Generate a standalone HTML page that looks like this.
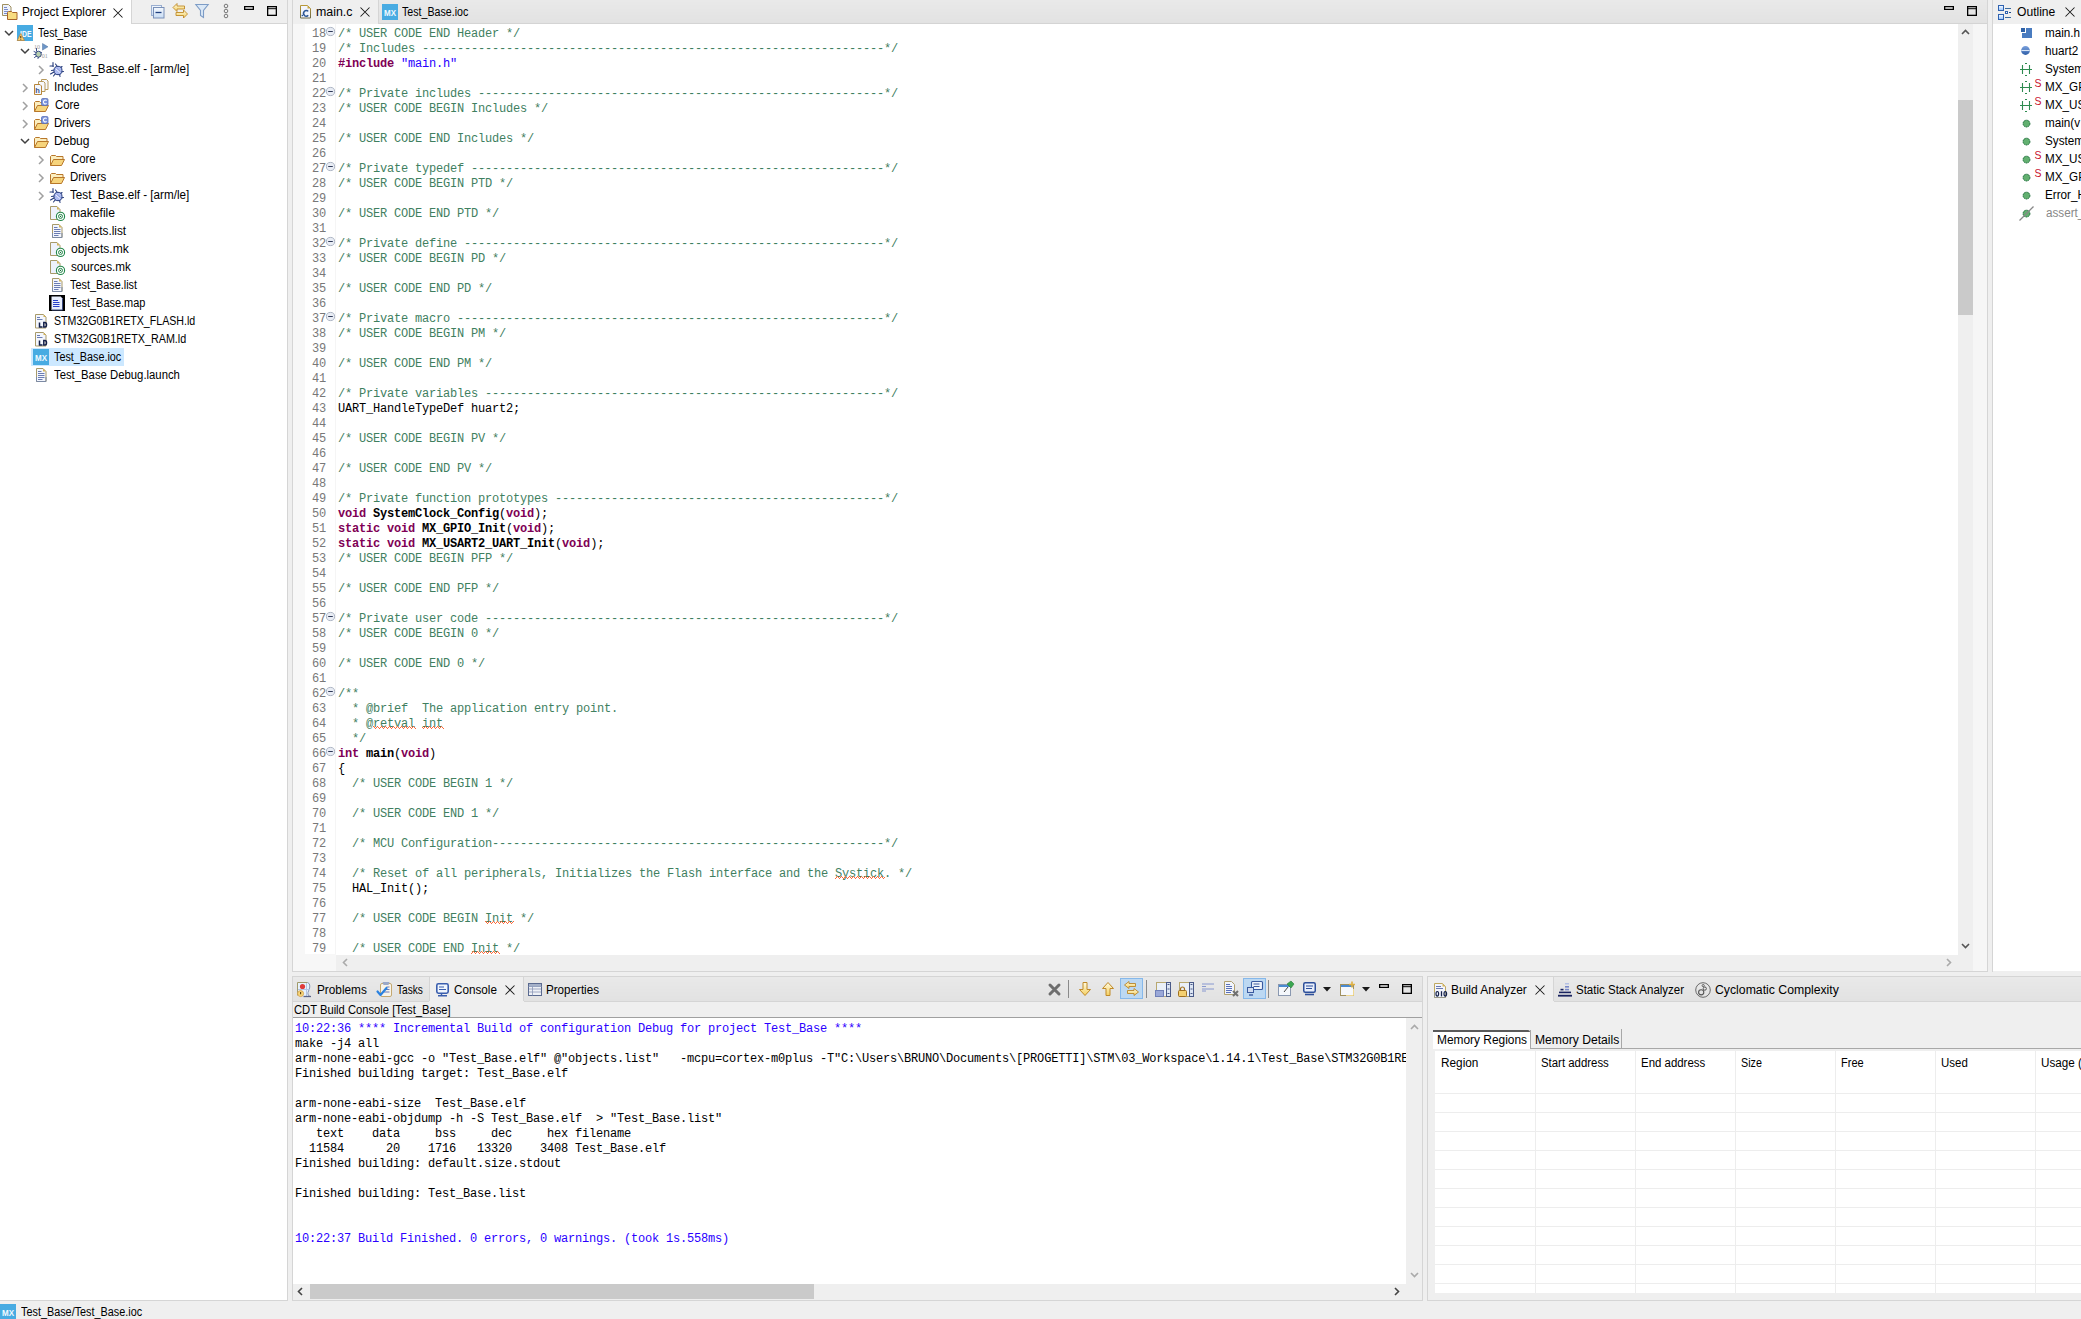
<!DOCTYPE html>
<html><head><meta charset="utf-8"><style>
html,body{margin:0;padding:0;}
body{width:2081px;height:1319px;position:relative;overflow:hidden;background:#efefef;}
.a{position:absolute;white-space:pre;}
svg.a{overflow:visible}
.ui{font-family:"Liberation Sans",sans-serif;font-size:12px;color:#000;}
.mono{font-family:"Liberation Mono",monospace;font-size:12px;letter-spacing:-0.2px;color:#000;}
.ln{color:#787878;}

</style></head><body>
<div class="a" style="left:0px;top:0px;width:287px;height:1300px;background:#fff;"></div>
<div class="a" style="left:287px;top:0px;width:1px;height:1300px;background:#d5d5d5;"></div>
<div class="a" style="left:0px;top:1300px;width:288px;height:1px;background:#d5d5d5;"></div>
<div class="a" style="left:131px;top:0px;width:156px;height:23px;background:#efefef;"></div>
<div class="a" style="left:131px;top:0px;width:1px;height:23px;background:#d5d5d5;"></div>
<div class="a" style="left:131px;top:23px;width:156px;height:1px;background:#d5d5d5;"></div>
<svg class="a" style="left:2px;top:4px" width="16" height="16" viewBox="0 0 16 16"><path d="M0.5 0.5h6l2.5 2.5v8.5h-8.5z" fill="#eef2fb" stroke="#a09060"/><path d="M2 3.5h3M2 5.5h4M2 7.5h4M2 9.5h3" stroke="#6b7fc4" stroke-width="0.9"/><path d="M5.5 15.5V8.5l1-1h3l1 1h4.5v7z" fill="#f8dc80" stroke="#a8652a" stroke-linejoin="round"/></svg>
<div class="a ui" style="left:21.52px;top:2px;height:20px;line-height:20px;transform:scaleX(0.9833);transform-origin:0 0;">Project Explorer</div>
<svg class="a" style="left:113px;top:8px" width="10" height="10" viewBox="0 0 10 10"><path d="M0.5 0.5L9.5 9.5M9.5 0.5L0.5 9.5" stroke="#1a1a1a" stroke-width="1.05"/></svg>
<svg class="a" style="left:150px;top:4px" width="16" height="16" viewBox="0 0 16 16"><defs><linearGradient id="cl" x1="0" y1="0" x2="0" y2="1"><stop offset="0" stop-color="#f4f8fd"/><stop offset="1" stop-color="#c8dcf4"/></linearGradient></defs><rect x="1.5" y="1.5" width="10" height="10" fill="url(#cl)" stroke="#9aaed0"/><rect x="3.5" y="3.5" width="10.5" height="10.5" fill="url(#cl)" stroke="#7a90b8"/><path d="M5.5 8.5h6" stroke="#1f3f80" stroke-width="1.3"/></svg>
<svg class="a" style="left:172px;top:2px" width="17" height="18" viewBox="0 0 17 18"><path d="M5 1.5L1 5.5L5 9.5V7h7.5V4H5z" fill="url(#ag)" stroke="#c08a28" stroke-width="0.9" stroke-linejoin="round"/><path d="M11.5 8L15.5 12L11.5 16V13.5H4V10.5h7.5z" fill="url(#ag)" stroke="#c08a28" stroke-width="0.9" stroke-linejoin="round"/></svg>
<svg class="a" style="left:195px;top:3px" width="14" height="16" viewBox="0 0 14 16"><path d="M0.8 1.5h12.4l-4.7 6v7l-3-2v-5z" fill="#dbe8f6" stroke="#7d9cc6" stroke-width="1.1"/></svg>
<svg class="a" style="left:222px;top:3px" width="8" height="16" viewBox="0 0 8 16"><circle cx="4" cy="3" r="1.8" fill="none" stroke="#777" stroke-width="1"/><circle cx="4" cy="8" r="1.8" fill="none" stroke="#777" stroke-width="1"/><circle cx="4" cy="13" r="1.8" fill="none" stroke="#777" stroke-width="1"/></svg>
<svg class="a" style="left:244px;top:6px" width="11" height="5" viewBox="0 0 11 5"><rect x="0.65" y="0.65" width="8.7" height="2.7" fill="#fff" stroke="#000" stroke-width="1.3"/></svg>
<svg class="a" style="left:267px;top:6px" width="11" height="11" viewBox="0 0 11 11"><rect x="0.65" y="0.65" width="8.7" height="8.7" fill="none" stroke="#000" stroke-width="1.3"/><path d="M0.5 2.7h9" stroke="#000" stroke-width="1"/></svg>
<svg class="a" style="left:4px;top:30px" width="10" height="6" viewBox="0 0 10 6"><path d="M1 1L5 5L9 1" fill="none" stroke="#404040" stroke-width="1.5"/></svg>
<svg class="a" style="left:17px;top:25px" width="16" height="16" viewBox="0 0 16 16"><rect width="16" height="16" fill="#48abe2"/><text x="3" y="11.5" textLength="11.5" lengthAdjust="spacingAndGlyphs" font-family="Liberation Sans" font-weight="bold" font-size="9" fill="#f2faff">IDE</text><path d="M3.8 8.5l3.6 7h-7.2z" fill="#f8d070" stroke="#c08030" stroke-width="0.7" stroke-linejoin="round"/><path d="M3.8 11v2.2" stroke="#402a10" stroke-width="1"/><circle cx="3.8" cy="14.3" r="0.5" fill="#402a10"/></svg>
<div class="a ui" style="left:38.00px;top:23px;height:20px;line-height:20px;transform:scaleX(0.8786);transform-origin:0 0;">Test_Base</div>
<svg class="a" style="left:20px;top:48px" width="10" height="6" viewBox="0 0 10 6"><path d="M1 1L5 5L9 1" fill="none" stroke="#404040" stroke-width="1.5"/></svg>
<svg class="a" style="left:33px;top:43px" width="16" height="16" viewBox="0 0 16 16"><text x="1" y="5.8" font-family="Liberation Serif" font-size="6" fill="#999">10</text><path d="M9.5 0.5l5.5 3.3-5.5 3.3z" fill="#6d96c8" stroke="#4a70a0" stroke-width="0.5"/><g stroke="#243a7a" stroke-width="0.9" stroke-linecap="round"><path d="M3.5 5.5v2.5M1 8.5l2 1M1 11.5h2M1.5 14.5l2-1.5M5 15.5l0.5-1.5M8.5 9.5l-1.5 1"/></g><ellipse cx="5.5" cy="11.2" rx="2.8" ry="3" fill="#b8d0b0" stroke="#243a7a" stroke-width="0.9"/><text x="8.8" y="14.5" font-family="Liberation Serif" font-size="6" fill="#999">01</text></svg>
<div class="a ui" style="left:53.84px;top:41px;height:20px;line-height:20px;transform:scaleX(0.9643);transform-origin:0 0;">Binaries</div>
<svg class="a" style="left:38px;top:65px" width="6" height="10" viewBox="0 0 6 10"><path d="M1 1L5 5L1 9" fill="none" stroke="#a0a0a0" stroke-width="1.5"/></svg>
<svg class="a" style="left:49px;top:61px" width="16" height="16" viewBox="0 0 16 16"><g stroke="#243a7a" stroke-width="1.1" stroke-linecap="round"><path d="M4 1.5v4M1 5h3.5M6.5 3l1.5 2M2.5 9.5l3 -0.5M1.5 13l3.5-2M4.5 15l2-2.5M11 15.5l-0.5-2.5M14.5 10.5l-3 0.5M13 5.5l-2 2"/></g><ellipse cx="9" cy="9.5" rx="4" ry="4.2" fill="#aebcf2" stroke="#243a7a" stroke-width="1"/><path d="M7 8l4 3.5" stroke="#fff" stroke-width="0.8"/><path d="M7.5 7l4 3.5" stroke="#7080c0" stroke-width="0.6"/></svg>
<div class="a ui" style="left:70.00px;top:59px;height:20px;line-height:20px;transform:scaleX(0.9713);transform-origin:0 0;">Test_Base.elf - [arm/le]</div>
<svg class="a" style="left:22px;top:83px" width="6" height="10" viewBox="0 0 6 10"><path d="M1 1L5 5L1 9" fill="none" stroke="#a0a0a0" stroke-width="1.5"/></svg>
<svg class="a" style="left:33px;top:79px" width="16" height="16" viewBox="0 0 16 16"><path d="M8.5 0.5h5l1.5 1.5v8.5h-6.5z" fill="#f7f8fc" stroke="#b89a5c"/><path d="M5.5 2.5h5l1.5 1.5v8.5h-6.5z" fill="#f7f8fc" stroke="#b89a5c"/><path d="M1.5 5.5h5.5l1.5 1.5v8.5h-7z" fill="#f3f6fd" stroke="#b8863a"/><text x="2.3" y="14" font-family="Liberation Sans" font-weight="bold" font-size="7.5" fill="#3a5288">h</text></svg>
<div class="a ui" style="left:53.81px;top:77px;height:20px;line-height:20px;transform:scaleX(0.9886);transform-origin:0 0;">Includes</div>
<svg class="a" style="left:22px;top:101px" width="6" height="10" viewBox="0 0 6 10"><path d="M1 1L5 5L1 9" fill="none" stroke="#a0a0a0" stroke-width="1.5"/></svg>
<svg class="a" style="left:33px;top:97px" width="16" height="16" viewBox="0 0 16 16"><path d="M1.5 14.5V5.5L2.5 4.5h4l1 1h6.5v3" fill="#fbeec0" stroke="#b8772a"/><path d="M1.5 14.5l3-6h11l-3 6z" fill="#f6d47c" stroke="#b8772a" stroke-linejoin="round"/><rect x="8.5" y="1.5" width="6.5" height="7" rx="1.2" fill="#7b93dc" stroke="#5b70b8" stroke-width="0.8"/><path d="M13.6 3.6a1.9 1.9 0 1 0 0 2.8" fill="none" stroke="#fff" stroke-width="1.1"/></svg>
<div class="a ui" style="left:54.80px;top:95px;height:20px;line-height:20px;transform:scaleX(0.9462);transform-origin:0 0;">Core</div>
<svg class="a" style="left:22px;top:119px" width="6" height="10" viewBox="0 0 6 10"><path d="M1 1L5 5L1 9" fill="none" stroke="#a0a0a0" stroke-width="1.5"/></svg>
<svg class="a" style="left:33px;top:115px" width="16" height="16" viewBox="0 0 16 16"><path d="M1.5 14.5V5.5L2.5 4.5h4l1 1h6.5v3" fill="#fbeec0" stroke="#b8772a"/><path d="M1.5 14.5l3-6h11l-3 6z" fill="#f6d47c" stroke="#b8772a" stroke-linejoin="round"/><rect x="8.5" y="1.5" width="6.5" height="7" rx="1.2" fill="#7b93dc" stroke="#5b70b8" stroke-width="0.8"/><path d="M13.6 3.6a1.9 1.9 0 1 0 0 2.8" fill="none" stroke="#fff" stroke-width="1.1"/></svg>
<div class="a ui" style="left:53.84px;top:113px;height:20px;line-height:20px;transform:scaleX(0.9595);transform-origin:0 0;">Drivers</div>
<svg class="a" style="left:20px;top:138px" width="10" height="6" viewBox="0 0 10 6"><path d="M1 1L5 5L9 1" fill="none" stroke="#404040" stroke-width="1.5"/></svg>
<svg class="a" style="left:33px;top:133px" width="16" height="16" viewBox="0 0 16 16"><path d="M1.5 14.5V5.5L2.5 4.5h4l1 1h6.5v3" fill="#fbeec0" stroke="#b8772a"/><path d="M1.5 14.5l3-6h11l-3 6z" fill="#f6d47c" stroke="#b8772a" stroke-linejoin="round"/></svg>
<div class="a ui" style="left:53.80px;top:131px;height:20px;line-height:20px;transform:scaleX(1.0029);transform-origin:0 0;">Debug</div>
<svg class="a" style="left:38px;top:155px" width="6" height="10" viewBox="0 0 6 10"><path d="M1 1L5 5L1 9" fill="none" stroke="#a0a0a0" stroke-width="1.5"/></svg>
<svg class="a" style="left:49px;top:151px" width="16" height="16" viewBox="0 0 16 16"><path d="M1.5 14.5V5.5L2.5 4.5h4l1 1h6.5v3" fill="#fbeec0" stroke="#b8772a"/><path d="M1.5 14.5l3-6h11l-3 6z" fill="#f6d47c" stroke="#b8772a" stroke-linejoin="round"/></svg>
<div class="a ui" style="left:71.00px;top:149px;height:20px;line-height:20px;transform:scaleX(0.9462);transform-origin:0 0;">Core</div>
<svg class="a" style="left:38px;top:173px" width="6" height="10" viewBox="0 0 6 10"><path d="M1 1L5 5L1 9" fill="none" stroke="#a0a0a0" stroke-width="1.5"/></svg>
<svg class="a" style="left:49px;top:169px" width="16" height="16" viewBox="0 0 16 16"><path d="M1.5 14.5V5.5L2.5 4.5h4l1 1h6.5v3" fill="#fbeec0" stroke="#b8772a"/><path d="M1.5 14.5l3-6h11l-3 6z" fill="#f6d47c" stroke="#b8772a" stroke-linejoin="round"/></svg>
<div class="a ui" style="left:70.05px;top:167px;height:20px;line-height:20px;transform:scaleX(0.9514);transform-origin:0 0;">Drivers</div>
<svg class="a" style="left:38px;top:191px" width="6" height="10" viewBox="0 0 6 10"><path d="M1 1L5 5L1 9" fill="none" stroke="#a0a0a0" stroke-width="1.5"/></svg>
<svg class="a" style="left:49px;top:187px" width="16" height="16" viewBox="0 0 16 16"><g stroke="#243a7a" stroke-width="1.1" stroke-linecap="round"><path d="M4 1.5v4M1 5h3.5M6.5 3l1.5 2M2.5 9.5l3 -0.5M1.5 13l3.5-2M4.5 15l2-2.5M11 15.5l-0.5-2.5M14.5 10.5l-3 0.5M13 5.5l-2 2"/></g><ellipse cx="9" cy="9.5" rx="4" ry="4.2" fill="#aebcf2" stroke="#243a7a" stroke-width="1"/><path d="M7 8l4 3.5" stroke="#fff" stroke-width="0.8"/><path d="M7.5 7l4 3.5" stroke="#7080c0" stroke-width="0.6"/></svg>
<div class="a ui" style="left:70.00px;top:185px;height:20px;line-height:20px;transform:scaleX(0.9713);transform-origin:0 0;">Test_Base.elf - [arm/le]</div>
<svg class="a" style="left:49px;top:205px" width="16" height="16" viewBox="0 0 16 16"><path d="M1.5 1.5h6.5l3 3v10h-9.5z" fill="#eef2fc" stroke="#a89a6a"/><path d="M8 1.5v3h3z" fill="#d4b45c"/><circle cx="11.5" cy="11.4" r="4.1" fill="#fff" stroke="#22884a" stroke-width="1.1"/><circle cx="11.5" cy="11.4" r="2" fill="#fff" stroke="#22884a" stroke-width="1"/><circle cx="11.5" cy="11.4" r="0.7" fill="#1a6a3a"/></svg>
<div class="a ui" style="left:69.99px;top:203px;height:20px;line-height:20px;transform:scaleX(1.0068);transform-origin:0 0;">makefile</div>
<svg class="a" style="left:49px;top:223px" width="16" height="16" viewBox="0 0 16 16"><path d="M3.5 1.5h6.5l3 3v10h-9.5z" fill="#f3f6fd" stroke="#a89a6a"/><path d="M3.5 10v4.5h9.5V10" fill="none" stroke="#7c8aa4"/><path d="M10 1.5v3h3z" fill="#d4b45c"/><path d="M5 4.5h3.5M5 6.5h6.5M5 8.5h6.5M5 10.5h6.5M5 12.5h4.5" stroke="#5a6eaa" stroke-width="0.9"/></svg>
<div class="a ui" style="left:71.00px;top:221px;height:20px;line-height:20px;transform:scaleX(0.9839);transform-origin:0 0;">objects.list</div>
<svg class="a" style="left:49px;top:241px" width="16" height="16" viewBox="0 0 16 16"><path d="M1.5 1.5h6.5l3 3v10h-9.5z" fill="#eef2fc" stroke="#a89a6a"/><path d="M8 1.5v3h3z" fill="#d4b45c"/><circle cx="11.5" cy="11.4" r="4.1" fill="#fff" stroke="#22884a" stroke-width="1.1"/><circle cx="11.5" cy="11.4" r="2" fill="#fff" stroke="#22884a" stroke-width="1"/><circle cx="11.5" cy="11.4" r="0.7" fill="#1a6a3a"/></svg>
<div class="a ui" style="left:71.00px;top:239px;height:20px;line-height:20px;transform:scaleX(1.0070);transform-origin:0 0;">objects.mk</div>
<svg class="a" style="left:49px;top:259px" width="16" height="16" viewBox="0 0 16 16"><path d="M1.5 1.5h6.5l3 3v10h-9.5z" fill="#eef2fc" stroke="#a89a6a"/><path d="M8 1.5v3h3z" fill="#d4b45c"/><circle cx="11.5" cy="11.4" r="4.1" fill="#fff" stroke="#22884a" stroke-width="1.1"/><circle cx="11.5" cy="11.4" r="2" fill="#fff" stroke="#22884a" stroke-width="1"/><circle cx="11.5" cy="11.4" r="0.7" fill="#1a6a3a"/></svg>
<div class="a ui" style="left:71.00px;top:257px;height:20px;line-height:20px;transform:scaleX(0.9754);transform-origin:0 0;">sources.mk</div>
<svg class="a" style="left:49px;top:277px" width="16" height="16" viewBox="0 0 16 16"><path d="M3.5 1.5h6.5l3 3v10h-9.5z" fill="#f3f6fd" stroke="#a89a6a"/><path d="M3.5 10v4.5h9.5V10" fill="none" stroke="#7c8aa4"/><path d="M10 1.5v3h3z" fill="#d4b45c"/><path d="M5 4.5h3.5M5 6.5h6.5M5 8.5h6.5M5 10.5h6.5M5 12.5h4.5" stroke="#5a6eaa" stroke-width="0.9"/></svg>
<div class="a ui" style="left:70.00px;top:275px;height:20px;line-height:20px;transform:scaleX(0.9054);transform-origin:0 0;">Test_Base.list</div>
<svg class="a" style="left:49px;top:295px" width="16" height="16" viewBox="0 0 16 16"><rect x="0" y="0" width="16" height="16" fill="#000"/><path d="M2.5 1.5h9l2 2v11.5h-11z" fill="#e8eefc"/><path d="M3 15h10.5V3" fill="none" stroke="#3a4a80" stroke-width="1"/><path d="M4 5.5h5M4 7.5h6.5M4 9.5h6.5M4 11.5h6.5" stroke="#2840c8" stroke-width="1.1"/><path d="M11.5 1.5l2 2" stroke="#889" stroke-width="1"/></svg>
<div class="a ui" style="left:70.00px;top:293px;height:20px;line-height:20px;transform:scaleX(0.9108);transform-origin:0 0;">Test_Base.map</div>
<svg class="a" style="left:33px;top:313px" width="16" height="16" viewBox="0 0 16 16"><path d="M2.5 1.5h8l2.5 2.5v11h-10.5z" fill="#f3f6fd" stroke="#a89a6a"/><path d="M10.5 1.5v2.5h2.5z" fill="#d4b45c"/><path d="M4 4.5h3M4 6.5h5.5" stroke="#5a6eaa" stroke-width="0.9"/><path d="M6.5 9.5v4.5h3M10.8 9.5v4.5h1.2a1.5 2.25 0 0 0 0-4.5z" fill="none" stroke="#14204a" stroke-width="1.5"/></svg>
<div class="a ui" style="left:53.81px;top:311px;height:20px;line-height:20px;transform:scaleX(0.8861);transform-origin:0 0;">STM32G0B1RETX_FLASH.ld</div>
<svg class="a" style="left:33px;top:331px" width="16" height="16" viewBox="0 0 16 16"><path d="M2.5 1.5h8l2.5 2.5v11h-10.5z" fill="#f3f6fd" stroke="#a89a6a"/><path d="M10.5 1.5v2.5h2.5z" fill="#d4b45c"/><path d="M4 4.5h3M4 6.5h5.5" stroke="#5a6eaa" stroke-width="0.9"/><path d="M6.5 9.5v4.5h3M10.8 9.5v4.5h1.2a1.5 2.25 0 0 0 0-4.5z" fill="none" stroke="#14204a" stroke-width="1.5"/></svg>
<div class="a ui" style="left:53.80px;top:329px;height:20px;line-height:20px;transform:scaleX(0.8973);transform-origin:0 0;">STM32G0B1RETX_RAM.ld</div>
<div class="a" style="left:31px;top:348px;width:93px;height:18px;background:#cce8ff;"></div>
<svg class="a" style="left:33px;top:349px" width="16" height="16" viewBox="0 0 16 16"><rect width="16" height="16" fill="#48abe2"/><text x="2" y="11.5" textLength="12" lengthAdjust="spacingAndGlyphs" font-family="Liberation Sans" font-weight="bold" font-size="9.5" fill="#f2faff">MX</text></svg>
<div class="a ui" style="left:54.00px;top:347px;height:20px;line-height:20px;transform:scaleX(0.9000);transform-origin:0 0;">Test_Base.ioc</div>
<svg class="a" style="left:33px;top:367px" width="16" height="16" viewBox="0 0 16 16"><path d="M3.5 1.5h6.5l3 3v10h-9.5z" fill="#f3f6fd" stroke="#a89a6a"/><path d="M3.5 10v4.5h9.5V10" fill="none" stroke="#7c8aa4"/><path d="M10 1.5v3h3z" fill="#d4b45c"/><path d="M5 4.5h3.5M5 6.5h6.5M5 8.5h6.5M5 10.5h6.5M5 12.5h4.5" stroke="#5a6eaa" stroke-width="0.9"/></svg>
<div class="a ui" style="left:54.00px;top:365px;height:20px;line-height:20px;transform:scaleX(0.9436);transform-origin:0 0;">Test_Base Debug.launch</div>
<div class="a" style="left:292px;top:0px;width:1px;height:972px;background:#d5d5d5;"></div>
<div class="a" style="left:1987px;top:0px;width:1px;height:972px;background:#d5d5d5;"></div>
<div class="a" style="left:292px;top:971px;width:1696px;height:1px;background:#d5d5d5;"></div>
<div class="a" style="left:293px;top:0px;width:1694px;height:1px;background:#e9e9e9;"></div>
<div class="a" style="left:293px;top:1px;width:1694px;height:1px;background:#e9e9e9;"></div>
<div class="a" style="left:293px;top:2px;width:1694px;height:1px;background:#e8e8e8;"></div>
<div class="a" style="left:293px;top:3px;width:1694px;height:1px;background:#e8e8e8;"></div>
<div class="a" style="left:293px;top:4px;width:1694px;height:1px;background:#e8e8e8;"></div>
<div class="a" style="left:293px;top:5px;width:1694px;height:1px;background:#e7e7e7;"></div>
<div class="a" style="left:293px;top:6px;width:1694px;height:1px;background:#e7e7e7;"></div>
<div class="a" style="left:293px;top:7px;width:1694px;height:1px;background:#e7e7e7;"></div>
<div class="a" style="left:293px;top:8px;width:1694px;height:1px;background:#e7e7e7;"></div>
<div class="a" style="left:293px;top:9px;width:1694px;height:1px;background:#e6e6e6;"></div>
<div class="a" style="left:293px;top:10px;width:1694px;height:1px;background:#e6e6e6;"></div>
<div class="a" style="left:293px;top:11px;width:1694px;height:1px;background:#e6e6e6;"></div>
<div class="a" style="left:293px;top:12px;width:1694px;height:1px;background:#e5e5e5;"></div>
<div class="a" style="left:293px;top:13px;width:1694px;height:1px;background:#e5e5e5;"></div>
<div class="a" style="left:293px;top:14px;width:1694px;height:1px;background:#e5e5e5;"></div>
<div class="a" style="left:293px;top:15px;width:1694px;height:1px;background:#e4e4e4;"></div>
<div class="a" style="left:293px;top:16px;width:1694px;height:1px;background:#e4e4e4;"></div>
<div class="a" style="left:293px;top:17px;width:1694px;height:1px;background:#e4e4e4;"></div>
<div class="a" style="left:293px;top:18px;width:1694px;height:1px;background:#e4e4e4;"></div>
<div class="a" style="left:293px;top:19px;width:1694px;height:1px;background:#e3e3e3;"></div>
<div class="a" style="left:293px;top:20px;width:1694px;height:1px;background:#e3e3e3;"></div>
<div class="a" style="left:293px;top:21px;width:1694px;height:1px;background:#e3e3e3;"></div>
<div class="a" style="left:293px;top:22px;width:1694px;height:1px;background:#e2e2e2;"></div>
<div class="a" style="left:293px;top:23px;width:1694px;height:1px;background:#e2e2e2;"></div>
<div class="a" style="left:293px;top:0px;width:85px;height:24px;background:#efefef;"></div>
<div class="a" style="left:378px;top:0px;width:1px;height:24px;background:#d5d5d5;"></div>
<div class="a" style="left:379px;top:23px;width:1608px;height:1px;background:#d4d4d4;"></div>
<svg class="a" style="left:300px;top:5px" width="12" height="14" viewBox="0 0 12 14"><defs><linearGradient id="cg" x1="0" y1="0" x2="0" y2="1"><stop offset="0" stop-color="#b89838"/><stop offset="1" stop-color="#6e6a48"/></linearGradient></defs><path d="M0.5 0.5h7l3 3v9.5h-10z" fill="#f2f5fd" stroke="url(#cg)"/><path d="M7.5 0.5v3h3z" fill="#c8a848"/><path d="M8.2 6.4A2.6 2.9 0 1 0 8.2 10.2" fill="none" stroke="#2c5594" stroke-width="1.5"/><rect x="1.6" y="9.8" width="1.4" height="1.4" fill="#2c5594"/></svg>
<div class="a ui" style="left:316.27px;top:2px;height:20px;line-height:20px;transform:scaleX(1.0324);transform-origin:0 0;">main.c</div>
<svg class="a" style="left:360px;top:7px" width="10" height="10" viewBox="0 0 10 10"><path d="M0.5 0.5L9.5 9.5M9.5 0.5L0.5 9.5" stroke="#1a1a1a" stroke-width="1.05"/></svg>
<svg class="a" style="left:382px;top:4px" width="16" height="16" viewBox="0 0 16 16"><rect width="16" height="16" fill="#48abe2"/><text x="2" y="11.5" textLength="12" lengthAdjust="spacingAndGlyphs" font-family="Liberation Sans" font-weight="bold" font-size="9.5" fill="#f2faff">MX</text></svg>
<div class="a ui" style="left:402.20px;top:2px;height:20px;line-height:20px;transform:scaleX(0.8867);transform-origin:0 0;">Test_Base.ioc</div>
<svg class="a" style="left:1944px;top:6px" width="11" height="5" viewBox="0 0 11 5"><rect x="0.65" y="0.65" width="8.7" height="2.7" fill="#fff" stroke="#000" stroke-width="1.3"/></svg>
<svg class="a" style="left:1967px;top:6px" width="11" height="11" viewBox="0 0 11 11"><rect x="0.65" y="0.65" width="8.7" height="8.7" fill="none" stroke="#000" stroke-width="1.3"/><path d="M0.5 2.7h9" stroke="#000" stroke-width="1"/></svg>
<div class="a" style="left:293px;top:24px;width:12px;height:931px;background:#f7f7f7;"></div>
<div class="a" style="left:305px;top:24px;width:31px;height:930px;background:#fff;"></div>
<div class="a" style="left:335px;top:24px;width:1px;height:930px;background:#f5f5f5;"></div>
<div class="a" style="left:336px;top:24px;width:1622px;height:931px;background:#fff;"></div>
<div class="a" style="left:1958px;top:24px;width:15px;height:947px;background:#efefef;"></div>
<div class="a" style="left:1973px;top:24px;width:14px;height:947px;background:#f6f6f6;"></div>
<div class="a" style="left:293px;top:954px;width:43px;height:17px;background:#f7f7f7;"></div>
<div class="a" style="left:336px;top:955px;width:1622px;height:16px;background:#efefef;"></div>
<div class="a" style="left:1958px;top:100px;width:15px;height:215px;background:#cacaca;"></div>
<svg class="a" style="left:1961px;top:29px" width="9" height="6" viewBox="0 0 9 6"><path d="M1 5L4.5 1.5L8 5" fill="none" stroke="#555" stroke-width="1.6"/></svg>
<svg class="a" style="left:1961px;top:943px" width="9" height="6" viewBox="0 0 9 6"><path d="M1 1L4.5 4.5L8 1" fill="none" stroke="#555" stroke-width="1.6"/></svg>
<svg class="a" style="left:342px;top:958px" width="6" height="9" viewBox="0 0 6 9"><path d="M5 1L1.5 4.5L5 8" fill="none" stroke="#aaa" stroke-width="1.6"/></svg>
<svg class="a" style="left:1946px;top:958px" width="6" height="9" viewBox="0 0 6 9"><path d="M1 1L4.5 4.5L1 8" fill="none" stroke="#aaa" stroke-width="1.6"/></svg>
<div class="a mono ln" style="left:296px;top:27px;height:15px;line-height:15px;width:30px;text-align:right;">18</div>
<svg class="a" style="left:326px;top:27px" width="10" height="10" viewBox="0 0 10 10"><circle cx="4.5" cy="4.5" r="4.1" fill="#e9edf5" stroke="#a4adbd" stroke-width="0.9"/><path d="M2.2 4.5h4.6" stroke="#2f3a58" stroke-width="1"/></svg>
<div class="a mono" style="left:338px;top:27px;height:15px;line-height:15px;"><span style="color:#3f7f5f">/* USER CODE END Header */</span></div>
<div class="a mono ln" style="left:296px;top:42px;height:15px;line-height:15px;width:30px;text-align:right;">19</div>
<div class="a mono" style="left:338px;top:42px;height:15px;line-height:15px;"><span style="color:#3f7f5f">/* Includes ------------------------------------------------------------------*/</span></div>
<div class="a mono ln" style="left:296px;top:57px;height:15px;line-height:15px;width:30px;text-align:right;">20</div>
<div class="a mono" style="left:338px;top:57px;height:15px;line-height:15px;"><b style="color:#7f0055">#include</b> <span style="color:#2a00ff">&quot;main.h&quot;</span></div>
<div class="a mono ln" style="left:296px;top:72px;height:15px;line-height:15px;width:30px;text-align:right;">21</div>
<div class="a mono ln" style="left:296px;top:87px;height:15px;line-height:15px;width:30px;text-align:right;">22</div>
<svg class="a" style="left:326px;top:87px" width="10" height="10" viewBox="0 0 10 10"><circle cx="4.5" cy="4.5" r="4.1" fill="#e9edf5" stroke="#a4adbd" stroke-width="0.9"/><path d="M2.2 4.5h4.6" stroke="#2f3a58" stroke-width="1"/></svg>
<div class="a mono" style="left:338px;top:87px;height:15px;line-height:15px;"><span style="color:#3f7f5f">/* Private includes ----------------------------------------------------------*/</span></div>
<div class="a mono ln" style="left:296px;top:102px;height:15px;line-height:15px;width:30px;text-align:right;">23</div>
<div class="a mono" style="left:338px;top:102px;height:15px;line-height:15px;"><span style="color:#3f7f5f">/* USER CODE BEGIN Includes */</span></div>
<div class="a mono ln" style="left:296px;top:117px;height:15px;line-height:15px;width:30px;text-align:right;">24</div>
<div class="a mono ln" style="left:296px;top:132px;height:15px;line-height:15px;width:30px;text-align:right;">25</div>
<div class="a mono" style="left:338px;top:132px;height:15px;line-height:15px;"><span style="color:#3f7f5f">/* USER CODE END Includes */</span></div>
<div class="a mono ln" style="left:296px;top:147px;height:15px;line-height:15px;width:30px;text-align:right;">26</div>
<div class="a mono ln" style="left:296px;top:162px;height:15px;line-height:15px;width:30px;text-align:right;">27</div>
<svg class="a" style="left:326px;top:162px" width="10" height="10" viewBox="0 0 10 10"><circle cx="4.5" cy="4.5" r="4.1" fill="#e9edf5" stroke="#a4adbd" stroke-width="0.9"/><path d="M2.2 4.5h4.6" stroke="#2f3a58" stroke-width="1"/></svg>
<div class="a mono" style="left:338px;top:162px;height:15px;line-height:15px;"><span style="color:#3f7f5f">/* Private typedef -----------------------------------------------------------*/</span></div>
<div class="a mono ln" style="left:296px;top:177px;height:15px;line-height:15px;width:30px;text-align:right;">28</div>
<div class="a mono" style="left:338px;top:177px;height:15px;line-height:15px;"><span style="color:#3f7f5f">/* USER CODE BEGIN PTD */</span></div>
<div class="a mono ln" style="left:296px;top:192px;height:15px;line-height:15px;width:30px;text-align:right;">29</div>
<div class="a mono ln" style="left:296px;top:207px;height:15px;line-height:15px;width:30px;text-align:right;">30</div>
<div class="a mono" style="left:338px;top:207px;height:15px;line-height:15px;"><span style="color:#3f7f5f">/* USER CODE END PTD */</span></div>
<div class="a mono ln" style="left:296px;top:222px;height:15px;line-height:15px;width:30px;text-align:right;">31</div>
<div class="a mono ln" style="left:296px;top:237px;height:15px;line-height:15px;width:30px;text-align:right;">32</div>
<svg class="a" style="left:326px;top:237px" width="10" height="10" viewBox="0 0 10 10"><circle cx="4.5" cy="4.5" r="4.1" fill="#e9edf5" stroke="#a4adbd" stroke-width="0.9"/><path d="M2.2 4.5h4.6" stroke="#2f3a58" stroke-width="1"/></svg>
<div class="a mono" style="left:338px;top:237px;height:15px;line-height:15px;"><span style="color:#3f7f5f">/* Private define ------------------------------------------------------------*/</span></div>
<div class="a mono ln" style="left:296px;top:252px;height:15px;line-height:15px;width:30px;text-align:right;">33</div>
<div class="a mono" style="left:338px;top:252px;height:15px;line-height:15px;"><span style="color:#3f7f5f">/* USER CODE BEGIN PD */</span></div>
<div class="a mono ln" style="left:296px;top:267px;height:15px;line-height:15px;width:30px;text-align:right;">34</div>
<div class="a mono ln" style="left:296px;top:282px;height:15px;line-height:15px;width:30px;text-align:right;">35</div>
<div class="a mono" style="left:338px;top:282px;height:15px;line-height:15px;"><span style="color:#3f7f5f">/* USER CODE END PD */</span></div>
<div class="a mono ln" style="left:296px;top:297px;height:15px;line-height:15px;width:30px;text-align:right;">36</div>
<div class="a mono ln" style="left:296px;top:312px;height:15px;line-height:15px;width:30px;text-align:right;">37</div>
<svg class="a" style="left:326px;top:312px" width="10" height="10" viewBox="0 0 10 10"><circle cx="4.5" cy="4.5" r="4.1" fill="#e9edf5" stroke="#a4adbd" stroke-width="0.9"/><path d="M2.2 4.5h4.6" stroke="#2f3a58" stroke-width="1"/></svg>
<div class="a mono" style="left:338px;top:312px;height:15px;line-height:15px;"><span style="color:#3f7f5f">/* Private macro -------------------------------------------------------------*/</span></div>
<div class="a mono ln" style="left:296px;top:327px;height:15px;line-height:15px;width:30px;text-align:right;">38</div>
<div class="a mono" style="left:338px;top:327px;height:15px;line-height:15px;"><span style="color:#3f7f5f">/* USER CODE BEGIN PM */</span></div>
<div class="a mono ln" style="left:296px;top:342px;height:15px;line-height:15px;width:30px;text-align:right;">39</div>
<div class="a mono ln" style="left:296px;top:357px;height:15px;line-height:15px;width:30px;text-align:right;">40</div>
<div class="a mono" style="left:338px;top:357px;height:15px;line-height:15px;"><span style="color:#3f7f5f">/* USER CODE END PM */</span></div>
<div class="a mono ln" style="left:296px;top:372px;height:15px;line-height:15px;width:30px;text-align:right;">41</div>
<div class="a mono ln" style="left:296px;top:387px;height:15px;line-height:15px;width:30px;text-align:right;">42</div>
<div class="a mono" style="left:338px;top:387px;height:15px;line-height:15px;"><span style="color:#3f7f5f">/* Private variables ---------------------------------------------------------*/</span></div>
<div class="a mono ln" style="left:296px;top:402px;height:15px;line-height:15px;width:30px;text-align:right;">43</div>
<div class="a mono" style="left:338px;top:402px;height:15px;line-height:15px;">UART_HandleTypeDef huart2;</div>
<div class="a mono ln" style="left:296px;top:417px;height:15px;line-height:15px;width:30px;text-align:right;">44</div>
<div class="a mono ln" style="left:296px;top:432px;height:15px;line-height:15px;width:30px;text-align:right;">45</div>
<div class="a mono" style="left:338px;top:432px;height:15px;line-height:15px;"><span style="color:#3f7f5f">/* USER CODE BEGIN PV */</span></div>
<div class="a mono ln" style="left:296px;top:447px;height:15px;line-height:15px;width:30px;text-align:right;">46</div>
<div class="a mono ln" style="left:296px;top:462px;height:15px;line-height:15px;width:30px;text-align:right;">47</div>
<div class="a mono" style="left:338px;top:462px;height:15px;line-height:15px;"><span style="color:#3f7f5f">/* USER CODE END PV */</span></div>
<div class="a mono ln" style="left:296px;top:477px;height:15px;line-height:15px;width:30px;text-align:right;">48</div>
<div class="a mono ln" style="left:296px;top:492px;height:15px;line-height:15px;width:30px;text-align:right;">49</div>
<div class="a mono" style="left:338px;top:492px;height:15px;line-height:15px;"><span style="color:#3f7f5f">/* Private function prototypes -----------------------------------------------*/</span></div>
<div class="a mono ln" style="left:296px;top:507px;height:15px;line-height:15px;width:30px;text-align:right;">50</div>
<div class="a mono" style="left:338px;top:507px;height:15px;line-height:15px;"><b style="color:#7f0055">void</b> <b>SystemClock_Config</b>(<b style="color:#7f0055">void</b>);</div>
<div class="a mono ln" style="left:296px;top:522px;height:15px;line-height:15px;width:30px;text-align:right;">51</div>
<div class="a mono" style="left:338px;top:522px;height:15px;line-height:15px;"><b style="color:#7f0055">static</b> <b style="color:#7f0055">void</b> <b>MX_GPIO_Init</b>(<b style="color:#7f0055">void</b>);</div>
<div class="a mono ln" style="left:296px;top:537px;height:15px;line-height:15px;width:30px;text-align:right;">52</div>
<div class="a mono" style="left:338px;top:537px;height:15px;line-height:15px;"><b style="color:#7f0055">static</b> <b style="color:#7f0055">void</b> <b>MX_USART2_UART_Init</b>(<b style="color:#7f0055">void</b>);</div>
<div class="a mono ln" style="left:296px;top:552px;height:15px;line-height:15px;width:30px;text-align:right;">53</div>
<div class="a mono" style="left:338px;top:552px;height:15px;line-height:15px;"><span style="color:#3f7f5f">/* USER CODE BEGIN PFP */</span></div>
<div class="a mono ln" style="left:296px;top:567px;height:15px;line-height:15px;width:30px;text-align:right;">54</div>
<div class="a mono ln" style="left:296px;top:582px;height:15px;line-height:15px;width:30px;text-align:right;">55</div>
<div class="a mono" style="left:338px;top:582px;height:15px;line-height:15px;"><span style="color:#3f7f5f">/* USER CODE END PFP */</span></div>
<div class="a mono ln" style="left:296px;top:597px;height:15px;line-height:15px;width:30px;text-align:right;">56</div>
<div class="a mono ln" style="left:296px;top:612px;height:15px;line-height:15px;width:30px;text-align:right;">57</div>
<svg class="a" style="left:326px;top:612px" width="10" height="10" viewBox="0 0 10 10"><circle cx="4.5" cy="4.5" r="4.1" fill="#e9edf5" stroke="#a4adbd" stroke-width="0.9"/><path d="M2.2 4.5h4.6" stroke="#2f3a58" stroke-width="1"/></svg>
<div class="a mono" style="left:338px;top:612px;height:15px;line-height:15px;"><span style="color:#3f7f5f">/* Private user code ---------------------------------------------------------*/</span></div>
<div class="a mono ln" style="left:296px;top:627px;height:15px;line-height:15px;width:30px;text-align:right;">58</div>
<div class="a mono" style="left:338px;top:627px;height:15px;line-height:15px;"><span style="color:#3f7f5f">/* USER CODE BEGIN 0 */</span></div>
<div class="a mono ln" style="left:296px;top:642px;height:15px;line-height:15px;width:30px;text-align:right;">59</div>
<div class="a mono ln" style="left:296px;top:657px;height:15px;line-height:15px;width:30px;text-align:right;">60</div>
<div class="a mono" style="left:338px;top:657px;height:15px;line-height:15px;"><span style="color:#3f7f5f">/* USER CODE END 0 */</span></div>
<div class="a mono ln" style="left:296px;top:672px;height:15px;line-height:15px;width:30px;text-align:right;">61</div>
<div class="a mono ln" style="left:296px;top:687px;height:15px;line-height:15px;width:30px;text-align:right;">62</div>
<svg class="a" style="left:326px;top:687px" width="10" height="10" viewBox="0 0 10 10"><circle cx="4.5" cy="4.5" r="4.1" fill="#e9edf5" stroke="#a4adbd" stroke-width="0.9"/><path d="M2.2 4.5h4.6" stroke="#2f3a58" stroke-width="1"/></svg>
<div class="a mono" style="left:338px;top:687px;height:15px;line-height:15px;"><span style="color:#3f7f5f">/**</span></div>
<div class="a mono ln" style="left:296px;top:702px;height:15px;line-height:15px;width:30px;text-align:right;">63</div>
<div class="a mono" style="left:338px;top:702px;height:15px;line-height:15px;"><span style="color:#3f7f5f">  * @brief  The application entry point.</span></div>
<div class="a mono ln" style="left:296px;top:717px;height:15px;line-height:15px;width:30px;text-align:right;">64</div>
<div class="a mono" style="left:338px;top:717px;height:15px;line-height:15px;"><span style="color:#3f7f5f">  * </span><span class="sq" style="color:#3f7f5f">@retval</span><span style="color:#3f7f5f"> </span><span class="sq" style="color:#3f7f5f">int</span></div>
<div class="a mono ln" style="left:296px;top:732px;height:15px;line-height:15px;width:30px;text-align:right;">65</div>
<div class="a mono" style="left:338px;top:732px;height:15px;line-height:15px;"><span style="color:#3f7f5f">  */</span></div>
<div class="a mono ln" style="left:296px;top:747px;height:15px;line-height:15px;width:30px;text-align:right;">66</div>
<svg class="a" style="left:326px;top:747px" width="10" height="10" viewBox="0 0 10 10"><circle cx="4.5" cy="4.5" r="4.1" fill="#e9edf5" stroke="#a4adbd" stroke-width="0.9"/><path d="M2.2 4.5h4.6" stroke="#2f3a58" stroke-width="1"/></svg>
<div class="a mono" style="left:338px;top:747px;height:15px;line-height:15px;"><b style="color:#7f0055">int</b> <b>main</b>(<b style="color:#7f0055">void</b>)</div>
<div class="a mono ln" style="left:296px;top:762px;height:15px;line-height:15px;width:30px;text-align:right;">67</div>
<div class="a mono" style="left:338px;top:762px;height:15px;line-height:15px;">{</div>
<div class="a mono ln" style="left:296px;top:777px;height:15px;line-height:15px;width:30px;text-align:right;">68</div>
<div class="a mono" style="left:338px;top:777px;height:15px;line-height:15px;"><span style="color:#3f7f5f">  /* USER CODE BEGIN 1 */</span></div>
<div class="a mono ln" style="left:296px;top:792px;height:15px;line-height:15px;width:30px;text-align:right;">69</div>
<div class="a mono ln" style="left:296px;top:807px;height:15px;line-height:15px;width:30px;text-align:right;">70</div>
<div class="a mono" style="left:338px;top:807px;height:15px;line-height:15px;"><span style="color:#3f7f5f">  /* USER CODE END 1 */</span></div>
<div class="a mono ln" style="left:296px;top:822px;height:15px;line-height:15px;width:30px;text-align:right;">71</div>
<div class="a mono ln" style="left:296px;top:837px;height:15px;line-height:15px;width:30px;text-align:right;">72</div>
<div class="a mono" style="left:338px;top:837px;height:15px;line-height:15px;"><span style="color:#3f7f5f">  /* MCU Configuration--------------------------------------------------------*/</span></div>
<div class="a mono ln" style="left:296px;top:852px;height:15px;line-height:15px;width:30px;text-align:right;">73</div>
<div class="a mono ln" style="left:296px;top:867px;height:15px;line-height:15px;width:30px;text-align:right;">74</div>
<div class="a mono" style="left:338px;top:867px;height:15px;line-height:15px;"><span style="color:#3f7f5f">  /* Reset of all peripherals, Initializes the Flash interface and the </span><span class="sq" style="color:#3f7f5f">Systick</span><span style="color:#3f7f5f">. */</span></div>
<div class="a mono ln" style="left:296px;top:882px;height:15px;line-height:15px;width:30px;text-align:right;">75</div>
<div class="a mono" style="left:338px;top:882px;height:15px;line-height:15px;">  HAL_Init();</div>
<div class="a mono ln" style="left:296px;top:897px;height:15px;line-height:15px;width:30px;text-align:right;">76</div>
<div class="a mono ln" style="left:296px;top:912px;height:15px;line-height:15px;width:30px;text-align:right;">77</div>
<div class="a mono" style="left:338px;top:912px;height:15px;line-height:15px;"><span style="color:#3f7f5f">  /* USER CODE BEGIN </span><span class="sq" style="color:#3f7f5f">Init</span><span style="color:#3f7f5f"> */</span></div>
<div class="a mono ln" style="left:296px;top:927px;height:15px;line-height:15px;width:30px;text-align:right;">78</div>
<div class="a mono ln" style="left:296px;top:942px;height:15px;line-height:15px;width:30px;text-align:right;">79</div>
<div class="a mono" style="left:338px;top:942px;height:15px;line-height:15px;"><span style="color:#3f7f5f">  /* USER CODE END </span><span class="sq" style="color:#3f7f5f">Init</span><span style="color:#3f7f5f"> */</span></div>
<svg class="a" style="left:373px;top:726px" width="43" height="3" viewBox="0 0 43 3"><g fill="#ff6a3a" shape-rendering="crispEdges"><rect x="0" y="0" width="1" height="1"/><rect x="1" y="1" width="1" height="1"/><rect x="2" y="2" width="1" height="1"/><rect x="3" y="1" width="1" height="1"/><rect x="4" y="0" width="1" height="1"/><rect x="5" y="1" width="1" height="1"/><rect x="6" y="2" width="1" height="1"/><rect x="7" y="1" width="1" height="1"/><rect x="8" y="0" width="1" height="1"/><rect x="9" y="1" width="1" height="1"/><rect x="10" y="2" width="1" height="1"/><rect x="11" y="1" width="1" height="1"/><rect x="12" y="0" width="1" height="1"/><rect x="13" y="1" width="1" height="1"/><rect x="14" y="2" width="1" height="1"/><rect x="15" y="1" width="1" height="1"/><rect x="16" y="0" width="1" height="1"/><rect x="17" y="1" width="1" height="1"/><rect x="18" y="2" width="1" height="1"/><rect x="19" y="1" width="1" height="1"/><rect x="20" y="0" width="1" height="1"/><rect x="21" y="1" width="1" height="1"/><rect x="22" y="2" width="1" height="1"/><rect x="23" y="1" width="1" height="1"/><rect x="24" y="0" width="1" height="1"/><rect x="25" y="1" width="1" height="1"/><rect x="26" y="2" width="1" height="1"/><rect x="27" y="1" width="1" height="1"/><rect x="28" y="0" width="1" height="1"/><rect x="29" y="1" width="1" height="1"/><rect x="30" y="2" width="1" height="1"/><rect x="31" y="1" width="1" height="1"/><rect x="32" y="0" width="1" height="1"/><rect x="33" y="1" width="1" height="1"/><rect x="34" y="2" width="1" height="1"/><rect x="35" y="1" width="1" height="1"/><rect x="36" y="0" width="1" height="1"/><rect x="37" y="1" width="1" height="1"/><rect x="38" y="2" width="1" height="1"/><rect x="39" y="1" width="1" height="1"/><rect x="40" y="0" width="1" height="1"/><rect x="41" y="1" width="1" height="1"/><rect x="42" y="2" width="1" height="1"/></g></svg>
<svg class="a" style="left:422px;top:726px" width="22" height="3" viewBox="0 0 22 3"><g fill="#ff6a3a" shape-rendering="crispEdges"><rect x="0" y="1" width="1" height="1"/><rect x="1" y="2" width="1" height="1"/><rect x="2" y="1" width="1" height="1"/><rect x="3" y="0" width="1" height="1"/><rect x="4" y="1" width="1" height="1"/><rect x="5" y="2" width="1" height="1"/><rect x="6" y="1" width="1" height="1"/><rect x="7" y="0" width="1" height="1"/><rect x="8" y="1" width="1" height="1"/><rect x="9" y="2" width="1" height="1"/><rect x="10" y="1" width="1" height="1"/><rect x="11" y="0" width="1" height="1"/><rect x="12" y="1" width="1" height="1"/><rect x="13" y="2" width="1" height="1"/><rect x="14" y="1" width="1" height="1"/><rect x="15" y="0" width="1" height="1"/><rect x="16" y="1" width="1" height="1"/><rect x="17" y="2" width="1" height="1"/><rect x="18" y="1" width="1" height="1"/><rect x="19" y="0" width="1" height="1"/><rect x="20" y="1" width="1" height="1"/><rect x="21" y="2" width="1" height="1"/></g></svg>
<svg class="a" style="left:835px;top:876px" width="50" height="3" viewBox="0 0 50 3"><g fill="#ff6a3a" shape-rendering="crispEdges"><rect x="0" y="2" width="1" height="1"/><rect x="1" y="1" width="1" height="1"/><rect x="2" y="0" width="1" height="1"/><rect x="3" y="1" width="1" height="1"/><rect x="4" y="2" width="1" height="1"/><rect x="5" y="1" width="1" height="1"/><rect x="6" y="0" width="1" height="1"/><rect x="7" y="1" width="1" height="1"/><rect x="8" y="2" width="1" height="1"/><rect x="9" y="1" width="1" height="1"/><rect x="10" y="0" width="1" height="1"/><rect x="11" y="1" width="1" height="1"/><rect x="12" y="2" width="1" height="1"/><rect x="13" y="1" width="1" height="1"/><rect x="14" y="0" width="1" height="1"/><rect x="15" y="1" width="1" height="1"/><rect x="16" y="2" width="1" height="1"/><rect x="17" y="1" width="1" height="1"/><rect x="18" y="0" width="1" height="1"/><rect x="19" y="1" width="1" height="1"/><rect x="20" y="2" width="1" height="1"/><rect x="21" y="1" width="1" height="1"/><rect x="22" y="0" width="1" height="1"/><rect x="23" y="1" width="1" height="1"/><rect x="24" y="2" width="1" height="1"/><rect x="25" y="1" width="1" height="1"/><rect x="26" y="0" width="1" height="1"/><rect x="27" y="1" width="1" height="1"/><rect x="28" y="2" width="1" height="1"/><rect x="29" y="1" width="1" height="1"/><rect x="30" y="0" width="1" height="1"/><rect x="31" y="1" width="1" height="1"/><rect x="32" y="2" width="1" height="1"/><rect x="33" y="1" width="1" height="1"/><rect x="34" y="0" width="1" height="1"/><rect x="35" y="1" width="1" height="1"/><rect x="36" y="2" width="1" height="1"/><rect x="37" y="1" width="1" height="1"/><rect x="38" y="0" width="1" height="1"/><rect x="39" y="1" width="1" height="1"/><rect x="40" y="2" width="1" height="1"/><rect x="41" y="1" width="1" height="1"/><rect x="42" y="0" width="1" height="1"/><rect x="43" y="1" width="1" height="1"/><rect x="44" y="2" width="1" height="1"/><rect x="45" y="1" width="1" height="1"/><rect x="46" y="0" width="1" height="1"/><rect x="47" y="1" width="1" height="1"/><rect x="48" y="2" width="1" height="1"/><rect x="49" y="1" width="1" height="1"/></g></svg>
<svg class="a" style="left:485px;top:921px" width="29" height="3" viewBox="0 0 29 3"><g fill="#ff6a3a" shape-rendering="crispEdges"><rect x="0" y="0" width="1" height="1"/><rect x="1" y="1" width="1" height="1"/><rect x="2" y="2" width="1" height="1"/><rect x="3" y="1" width="1" height="1"/><rect x="4" y="0" width="1" height="1"/><rect x="5" y="1" width="1" height="1"/><rect x="6" y="2" width="1" height="1"/><rect x="7" y="1" width="1" height="1"/><rect x="8" y="0" width="1" height="1"/><rect x="9" y="1" width="1" height="1"/><rect x="10" y="2" width="1" height="1"/><rect x="11" y="1" width="1" height="1"/><rect x="12" y="0" width="1" height="1"/><rect x="13" y="1" width="1" height="1"/><rect x="14" y="2" width="1" height="1"/><rect x="15" y="1" width="1" height="1"/><rect x="16" y="0" width="1" height="1"/><rect x="17" y="1" width="1" height="1"/><rect x="18" y="2" width="1" height="1"/><rect x="19" y="1" width="1" height="1"/><rect x="20" y="0" width="1" height="1"/><rect x="21" y="1" width="1" height="1"/><rect x="22" y="2" width="1" height="1"/><rect x="23" y="1" width="1" height="1"/><rect x="24" y="0" width="1" height="1"/><rect x="25" y="1" width="1" height="1"/><rect x="26" y="2" width="1" height="1"/><rect x="27" y="1" width="1" height="1"/><rect x="28" y="0" width="1" height="1"/></g></svg>
<svg class="a" style="left:471px;top:951px" width="29" height="3" viewBox="0 0 29 3"><g fill="#ff6a3a" shape-rendering="crispEdges"><rect x="0" y="2" width="1" height="1"/><rect x="1" y="1" width="1" height="1"/><rect x="2" y="0" width="1" height="1"/><rect x="3" y="1" width="1" height="1"/><rect x="4" y="2" width="1" height="1"/><rect x="5" y="1" width="1" height="1"/><rect x="6" y="0" width="1" height="1"/><rect x="7" y="1" width="1" height="1"/><rect x="8" y="2" width="1" height="1"/><rect x="9" y="1" width="1" height="1"/><rect x="10" y="0" width="1" height="1"/><rect x="11" y="1" width="1" height="1"/><rect x="12" y="2" width="1" height="1"/><rect x="13" y="1" width="1" height="1"/><rect x="14" y="0" width="1" height="1"/><rect x="15" y="1" width="1" height="1"/><rect x="16" y="2" width="1" height="1"/><rect x="17" y="1" width="1" height="1"/><rect x="18" y="0" width="1" height="1"/><rect x="19" y="1" width="1" height="1"/><rect x="20" y="2" width="1" height="1"/><rect x="21" y="1" width="1" height="1"/><rect x="22" y="0" width="1" height="1"/><rect x="23" y="1" width="1" height="1"/><rect x="24" y="2" width="1" height="1"/><rect x="25" y="1" width="1" height="1"/><rect x="26" y="0" width="1" height="1"/><rect x="27" y="1" width="1" height="1"/><rect x="28" y="2" width="1" height="1"/></g></svg>
<div class="a" style="left:1992px;top:0px;width:1px;height:972px;background:#d5d5d5;"></div>
<div class="a" style="left:1993px;top:0px;width:89px;height:24px;background:#efefef;"></div>
<div class="a" style="left:1993px;top:24px;width:89px;height:947px;background:#fff;"></div>
<svg class="a" style="left:1997px;top:4px" width="16" height="17" viewBox="0 0 16 17"><defs><linearGradient id="og" x1="0" y1="0" x2="0" y2="1"><stop offset="0" stop-color="#ffffff"/><stop offset="1" stop-color="#92c2ff"/></linearGradient></defs><rect x="1.5" y="1.5" width="5" height="5" fill="url(#og)" stroke="#2f62b0"/><rect x="1.5" y="10.5" width="5" height="5" fill="url(#og)" stroke="#2f62b0"/><path d="M8 4.5h6M8 13.5h6" stroke="#3a6aa0" stroke-width="1.1"/><rect x="8.5" y="7.5" width="2" height="2" fill="#fff" stroke="#2f62b0"/><path d="M12 8.5h2" stroke="#1f4a8a" stroke-width="1"/></svg>
<div class="a ui" style="left:2017.40px;top:2px;height:20px;line-height:20px;transform:scaleX(1.0079);transform-origin:0 0;">Outline</div>
<svg class="a" style="left:2065px;top:7px" width="10" height="10" viewBox="0 0 10 10"><path d="M0.5 0.5L9.5 9.5M9.5 0.5L0.5 9.5" stroke="#1a1a1a" stroke-width="1.05"/></svg>
<svg class="a" style="left:2021px;top:28px" width="12" height="11" viewBox="0 0 12 11"><rect x="0" y="0" width="4" height="4" fill="#2f62a8"/><path d="M5 0h6v10h-10v-5h4z" fill="#4a7cc0"/></svg>
<div class="a ui" style="left:2045.03px;top:23px;height:20px;line-height:20px;transform:scaleX(0.9750);transform-origin:0 0;">main.h</div>
<svg class="a" style="left:2021px;top:46px" width="10" height="10" viewBox="0 0 10 10"><defs><linearGradient id="vg" x1="0" y1="0" x2="0" y2="1"><stop offset="0" stop-color="#7aa0dc"/><stop offset="1" stop-color="#2f5fa8"/></linearGradient></defs><circle cx="4.5" cy="4.5" r="4.4" fill="url(#vg)"/><path d="M0.3 4.5h8.4" stroke="#d8e6f8" stroke-width="1.1"/></svg>
<div class="a ui" style="left:2045.03px;top:41px;height:20px;line-height:20px;transform:scaleX(0.9750);transform-origin:0 0;">huart2</div>
<svg class="a" style="left:2018px;top:62px" width="16" height="16" viewBox="0 0 16 16"><path d="M2 7.5h12M4.5 3v9M11.5 3v9" stroke="#2e8b50" stroke-width="1.1"/><path d="M7 1.5h2M7 13.5h2" stroke="#2e8b50" stroke-width="1"/></svg>
<div class="a ui" style="left:2045.03px;top:59px;height:20px;line-height:20px;transform:scaleX(0.9750);transform-origin:0 0;">System</div>
<svg class="a" style="left:2018px;top:80px" width="16" height="16" viewBox="0 0 16 16"><path d="M2 7.5h12M4.5 3v9M11.5 3v9" stroke="#2e8b50" stroke-width="1.1"/><path d="M7 1.5h2M7 13.5h2" stroke="#2e8b50" stroke-width="1"/></svg>
<div class="a ui" style="left:2034.6px;top:77px;font-size:10.5px;line-height:12px;color:#c8102e;">S</div>
<div class="a ui" style="left:2045.03px;top:77px;height:20px;line-height:20px;transform:scaleX(0.9750);transform-origin:0 0;">MX_GP</div>
<svg class="a" style="left:2018px;top:98px" width="16" height="16" viewBox="0 0 16 16"><path d="M2 7.5h12M4.5 3v9M11.5 3v9" stroke="#2e8b50" stroke-width="1.1"/><path d="M7 1.5h2M7 13.5h2" stroke="#2e8b50" stroke-width="1"/></svg>
<div class="a ui" style="left:2034.6px;top:95px;font-size:10.5px;line-height:12px;color:#c8102e;">S</div>
<div class="a ui" style="left:2045.03px;top:95px;height:20px;line-height:20px;transform:scaleX(0.9750);transform-origin:0 0;">MX_US</div>
<svg class="a" style="left:2022px;top:119px" width="9" height="9" viewBox="0 0 9 9"><circle cx="4.5" cy="4.6" r="3.4" fill="#62b070" stroke="#1f6e3c" stroke-width="1" stroke-dasharray="1.6 0.6"/></svg>
<div class="a ui" style="left:2045.03px;top:113px;height:20px;line-height:20px;transform:scaleX(0.9750);transform-origin:0 0;">main(v</div>
<svg class="a" style="left:2022px;top:137px" width="9" height="9" viewBox="0 0 9 9"><circle cx="4.5" cy="4.6" r="3.4" fill="#62b070" stroke="#1f6e3c" stroke-width="1" stroke-dasharray="1.6 0.6"/></svg>
<div class="a ui" style="left:2045.03px;top:131px;height:20px;line-height:20px;transform:scaleX(0.9750);transform-origin:0 0;">System</div>
<svg class="a" style="left:2022px;top:155px" width="9" height="9" viewBox="0 0 9 9"><circle cx="4.5" cy="4.6" r="3.4" fill="#62b070" stroke="#1f6e3c" stroke-width="1" stroke-dasharray="1.6 0.6"/></svg>
<div class="a ui" style="left:2034.6px;top:149px;font-size:10.5px;line-height:12px;color:#c8102e;">S</div>
<div class="a ui" style="left:2045.03px;top:149px;height:20px;line-height:20px;transform:scaleX(0.9750);transform-origin:0 0;">MX_US</div>
<svg class="a" style="left:2022px;top:173px" width="9" height="9" viewBox="0 0 9 9"><circle cx="4.5" cy="4.6" r="3.4" fill="#62b070" stroke="#1f6e3c" stroke-width="1" stroke-dasharray="1.6 0.6"/></svg>
<div class="a ui" style="left:2034.6px;top:167px;font-size:10.5px;line-height:12px;color:#c8102e;">S</div>
<div class="a ui" style="left:2045.03px;top:167px;height:20px;line-height:20px;transform:scaleX(0.9750);transform-origin:0 0;">MX_GP</div>
<svg class="a" style="left:2022px;top:191px" width="9" height="9" viewBox="0 0 9 9"><circle cx="4.5" cy="4.6" r="3.4" fill="#62b070" stroke="#1f6e3c" stroke-width="1" stroke-dasharray="1.6 0.6"/></svg>
<div class="a ui" style="left:2045.03px;top:185px;height:20px;line-height:20px;transform:scaleX(0.9750);transform-origin:0 0;">Error_H</div>
<svg class="a" style="left:2022px;top:209px" width="9" height="9" viewBox="0 0 9 9"><circle cx="4.5" cy="4.6" r="3.4" fill="#62b070" stroke="#1f6e3c" stroke-width="1" stroke-dasharray="1.6 0.6"/></svg>
<svg class="a" style="left:2018px;top:205px" width="17" height="17" viewBox="0 0 17 17"><path d="M1.5 15.5L15.5 1.5" stroke="#888" stroke-width="1.3"/></svg>
<div class="a ui" style="left:2046.00px;top:203px;height:20px;line-height:20px;transform:scaleX(0.9750);transform-origin:0 0;color:#888;">assert_</div>
<div class="a" style="left:292px;top:976px;width:1131px;height:1px;background:#d5d5d5;"></div>
<div class="a" style="left:292px;top:976px;width:1px;height:325px;background:#d5d5d5;"></div>
<div class="a" style="left:1422px;top:976px;width:1px;height:325px;background:#d5d5d5;"></div>
<div class="a" style="left:292px;top:1300px;width:1131px;height:1px;background:#d5d5d5;"></div>
<div class="a" style="left:293px;top:977px;width:1129px;height:1px;background:#e9e9e9;"></div>
<div class="a" style="left:293px;top:978px;width:1129px;height:1px;background:#e9e9e9;"></div>
<div class="a" style="left:293px;top:979px;width:1129px;height:1px;background:#e8e8e8;"></div>
<div class="a" style="left:293px;top:980px;width:1129px;height:1px;background:#e8e8e8;"></div>
<div class="a" style="left:293px;top:981px;width:1129px;height:1px;background:#e8e8e8;"></div>
<div class="a" style="left:293px;top:982px;width:1129px;height:1px;background:#e7e7e7;"></div>
<div class="a" style="left:293px;top:983px;width:1129px;height:1px;background:#e7e7e7;"></div>
<div class="a" style="left:293px;top:984px;width:1129px;height:1px;background:#e7e7e7;"></div>
<div class="a" style="left:293px;top:985px;width:1129px;height:1px;background:#e7e7e7;"></div>
<div class="a" style="left:293px;top:986px;width:1129px;height:1px;background:#e6e6e6;"></div>
<div class="a" style="left:293px;top:987px;width:1129px;height:1px;background:#e6e6e6;"></div>
<div class="a" style="left:293px;top:988px;width:1129px;height:1px;background:#e6e6e6;"></div>
<div class="a" style="left:293px;top:989px;width:1129px;height:1px;background:#e5e5e5;"></div>
<div class="a" style="left:293px;top:990px;width:1129px;height:1px;background:#e5e5e5;"></div>
<div class="a" style="left:293px;top:991px;width:1129px;height:1px;background:#e5e5e5;"></div>
<div class="a" style="left:293px;top:992px;width:1129px;height:1px;background:#e4e4e4;"></div>
<div class="a" style="left:293px;top:993px;width:1129px;height:1px;background:#e4e4e4;"></div>
<div class="a" style="left:293px;top:994px;width:1129px;height:1px;background:#e4e4e4;"></div>
<div class="a" style="left:293px;top:995px;width:1129px;height:1px;background:#e4e4e4;"></div>
<div class="a" style="left:293px;top:996px;width:1129px;height:1px;background:#e3e3e3;"></div>
<div class="a" style="left:293px;top:997px;width:1129px;height:1px;background:#e3e3e3;"></div>
<div class="a" style="left:293px;top:998px;width:1129px;height:1px;background:#e3e3e3;"></div>
<div class="a" style="left:293px;top:999px;width:1129px;height:1px;background:#e2e2e2;"></div>
<div class="a" style="left:293px;top:1000px;width:1129px;height:1px;background:#e2e2e2;"></div>
<div class="a" style="left:429px;top:977px;width:94px;height:24px;background:#efefef;"></div>
<div class="a" style="left:429px;top:977px;width:1px;height:24px;background:#d5d5d5;"></div>
<div class="a" style="left:523px;top:977px;width:1px;height:24px;background:#d5d5d5;"></div>
<div class="a" style="left:293px;top:1001px;width:136px;height:1px;background:#d5d5d5;"></div>
<div class="a" style="left:524px;top:1001px;width:898px;height:1px;background:#d5d5d5;"></div>
<div class="a" style="left:293px;top:1002px;width:1129px;height:15px;background:#efefef;"></div>
<div class="a" style="left:293px;top:1017px;width:1129px;height:1px;background:#a0a0a0;"></div>
<div class="a" style="left:293px;top:1018px;width:1113px;height:266px;background:#fff;"></div>
<div class="a" style="left:1406px;top:1018px;width:16px;height:266px;background:#efefef;"></div>
<div class="a" style="left:293px;top:1284px;width:1129px;height:16px;background:#efefef;"></div>
<div class="a" style="left:310px;top:1284px;width:504px;height:15px;background:#cacaca;"></div>
<svg class="a" style="left:1410px;top:1024px" width="9" height="6" viewBox="0 0 9 6"><path d="M1 5L4.5 1.5L8 5" fill="none" stroke="#aaa" stroke-width="1.6"/></svg>
<svg class="a" style="left:1410px;top:1272px" width="9" height="6" viewBox="0 0 9 6"><path d="M1 1L4.5 4.5L8 1" fill="none" stroke="#aaa" stroke-width="1.6"/></svg>
<svg class="a" style="left:297px;top:1287px" width="6" height="9" viewBox="0 0 6 9"><path d="M5 1L1.5 4.5L5 8" fill="none" stroke="#444" stroke-width="1.6"/></svg>
<svg class="a" style="left:1394px;top:1287px" width="6" height="9" viewBox="0 0 6 9"><path d="M1 1L4.5 4.5L1 8" fill="none" stroke="#444" stroke-width="1.6"/></svg>
<svg class="a" style="left:297px;top:982px" width="15" height="15" viewBox="0 0 15 15"><path d="M0.5 14V0.5h10.5c2.5 0.5 2.8 4 1.8 6.5l-1.3 3.5c-0.3 2 0.5 3.5 2 4h-13z" fill="#e6f2fd" stroke="none"/><path d="M0.5 13.5V0.5h10" fill="none" stroke="#a09a6a"/><path d="M10.5 0.5c2.5 0.5 2.8 4 1.8 6.5l-1.3 3.5c-0.3 2 0.5 3.5 2 4" fill="none" stroke="#8a94b0"/><path d="M1 7.5h12M9.5 1v13" stroke="#b4c4e4"/><path d="M6.5 14.5h7.5" stroke="#5a6488" stroke-width="1.3"/><circle cx="5.5" cy="4.5" r="2.6" fill="#e03a3a"/><circle cx="3.6" cy="11.6" r="3" fill="#f6d77a" stroke="#d49a48" stroke-width="0.8"/><path d="M3.6 10v2.3" stroke="#5a3a10" stroke-width="1.1"/></svg>
<div class="a ui" style="left:316.52px;top:980px;height:20px;line-height:20px;transform:scaleX(0.9820);transform-origin:0 0;">Problems</div>
<svg class="a" style="left:376px;top:981px" width="17" height="17" viewBox="0 0 17 17"><rect x="4.5" y="2.5" width="11" height="13" rx="1.5" fill="#f8f4ea" stroke="#c4a870"/><path d="M6.5 1h7l-1 3h-5z" fill="#9aa8c8"/><path d="M10.5 6h3M10 8.5h3.5M8 11h5.5" stroke="#6a7ab8" stroke-width="1"/><path d="M1.5 10.5l3 3.5l6-7" fill="none" stroke="#2a82e0" stroke-width="2.2" stroke-linecap="round" stroke-linejoin="round"/></svg>
<div class="a ui" style="left:397.00px;top:980px;height:20px;line-height:20px;transform:scaleX(0.8452);transform-origin:0 0;">Tasks</div>
<svg class="a" style="left:436px;top:983px" width="13" height="14" viewBox="0 0 13 14"><rect x="0.8" y="0.8" width="11.4" height="9.4" rx="1.6" fill="#f0f6fd" stroke="#3a5eae" stroke-width="1.6"/><path d="M3 4h5M3 6.5h7" stroke="#3a5eae" stroke-width="1"/><path d="M5.5 11v1.5M2 12.8h9" stroke="#3a5eae" stroke-width="1.4"/></svg>
<div class="a ui" style="left:453.80px;top:980px;height:20px;line-height:20px;transform:scaleX(0.9750);transform-origin:0 0;">Console</div>
<svg class="a" style="left:505px;top:985px" width="10" height="10" viewBox="0 0 10 10"><path d="M0.5 0.5L9.5 9.5M9.5 0.5L0.5 9.5" stroke="#1a1a1a" stroke-width="1.05"/></svg>
<svg class="a" style="left:528px;top:983px" width="14" height="13" viewBox="0 0 14 13"><rect x="0.5" y="0.5" width="13" height="12" fill="#eef1f6" stroke="#5a6a90"/><rect x="1" y="1" width="12" height="2.5" fill="#a4b0c8"/><path d="M0.5 3.5h13M4.5 3.5v9M1 6h12M1 9h12" stroke="#8a98b8" stroke-width="0.8"/></svg>
<div class="a ui" style="left:546.43px;top:980px;height:20px;line-height:20px;transform:scaleX(0.9685);transform-origin:0 0;">Properties</div>
<svg class="a" style="left:1047px;top:982px" width="15" height="15" viewBox="0 0 15 15"><path d="M3 3L12 12M12 3L3 12" stroke="#6e6e6e" stroke-width="3" stroke-linecap="round"/></svg>
<div class="a" style="left:1068px;top:980px;width:1px;height:18px;background:#8a8a8a;"></div>
<svg class="a" style="left:1078px;top:981px" width="14" height="16" viewBox="0 0 14 16"><defs><linearGradient id="ag" x1="0" y1="0" x2="0" y2="1"><stop offset="0" stop-color="#fffbe0"/><stop offset="1" stop-color="#f4cf60"/></linearGradient></defs><path d="M5 1.5h4v7h3.5L7 14.5L1.5 8.5H5z" fill="url(#ag)" stroke="#c08a28" stroke-linejoin="round"/></svg>
<svg class="a" style="left:1101px;top:981px" width="14" height="16" viewBox="0 0 14 16"><path d="M5 14.5h4v-7h3.5L7 1.5L1.5 7.5H5z" fill="url(#ag)" stroke="#c08a28" stroke-linejoin="round"/></svg>
<div class="a" style="left:1120px;top:978px;width:23px;height:21px;background:#bcd8f2;border:1px solid #86b8ea;box-sizing:border-box;"></div>
<svg class="a" style="left:1123px;top:980px" width="17" height="17" viewBox="0 0 17 17"><path d="M6 1.5L1.5 5L6 8.5V6.5h6.5V3.5H6z" fill="url(#ag)" stroke="#b8862a" stroke-width="0.9"/><path d="M11 8.5L15.5 12L11 15.5V13.5H4.5V10.5H11z" fill="url(#ag)" stroke="#b8862a" stroke-width="0.9"/></svg>
<div class="a" style="left:1146px;top:980px;width:1px;height:18px;background:#8a8a8a;"></div>
<svg class="a" style="left:1155px;top:982px" width="16" height="15" viewBox="0 0 16 15"><rect x="1.5" y="0.5" width="14" height="14" fill="#eaf0f8" stroke="#b8a870"/><rect x="11.5" y="0.5" width="4" height="14" fill="#dde6f4" stroke="#4a5a88"/><path d="M12.5 2.5h2M12.5 7h2M12.5 11.5h2" stroke="#4a5a88"/><rect x="0.5" y="8.5" width="8" height="6" fill="#9aa8d8" stroke="#7080b8"/></svg>
<svg class="a" style="left:1178px;top:982px" width="16" height="15" viewBox="0 0 16 15"><rect x="1.5" y="0.5" width="14" height="14" fill="#eaf0f8" stroke="#b8a870"/><rect x="11.5" y="0.5" width="4" height="14" fill="#dde6f4" stroke="#4a5a88"/><path d="M12.5 2.5h2M12.5 7h2M12.5 11.5h2" stroke="#4a5a88"/><rect x="0.5" y="8.5" width="8" height="6" rx="1" fill="#f4d070" stroke="#a07020"/><path d="M2.5 8.5V7a2 2 0 0 1 4 0v1.5" fill="none" stroke="#a07020" stroke-width="1.2"/></svg>
<svg class="a" style="left:1202px;top:983px" width="13" height="9" viewBox="0 0 13 9"><path d="M0 1h12M0 3.5h4M0 6h12M0 8h4" stroke="#8898d0" stroke-width="1"/></svg>
<svg class="a" style="left:1223px;top:981px" width="17" height="16" viewBox="0 0 17 16"><path d="M1.5 0.5h7l3 3v10h-10z" fill="#f2f5fc" stroke="#b0a070"/><path d="M3 3.5h4M3 5.5h6M3 7.5h6M3 9.5h6M3 11.5h5" stroke="#5a70b8"/><path d="M10 10l5 5M15 10l-5 5" stroke="#707070" stroke-width="2"/></svg>
<div class="a" style="left:1243px;top:978px;width:23px;height:21px;background:#bcd8f2;border:1px solid #86b8ea;box-sizing:border-box;"></div>
<svg class="a" style="left:1247px;top:981px" width="16" height="16" viewBox="0 0 16 16"><rect x="4.5" y="0.5" width="11" height="8" rx="1" fill="#eef3fb" stroke="#3a5aa0" stroke-width="1.1"/><path d="M6.5 3h6M6.5 5.5h6" stroke="#3a5aa0"/><rect x="0.5" y="6.5" width="6" height="5" fill="#d0dcf0" stroke="#3a5aa0"/><path d="M2 14h4" stroke="#3a5aa0" stroke-width="1.4"/></svg>
<div class="a" style="left:1268px;top:980px;width:1px;height:18px;background:#8a8a8a;"></div>
<svg class="a" style="left:1278px;top:981px" width="16" height="16" viewBox="0 0 16 16"><rect x="0.5" y="3.5" width="12" height="11" fill="#f4f7fb" stroke="#8a98b0"/><rect x="1" y="4" width="11" height="2" fill="#4a8ad0"/><path d="M6 11L10 6" stroke="#444" stroke-width="1"/><path d="M9 3l4-3 3 3-3 4z" fill="#3aa650" stroke="#2a7a3a" stroke-width="0.6"/></svg>
<svg class="a" style="left:1303px;top:982px" width="13" height="14" viewBox="0 0 13 14"><rect x="0.75" y="0.75" width="11.5" height="9.5" rx="1.5" fill="#e8eefa" stroke="#2d4f9a" stroke-width="1.5"/><path d="M3 4h7M3 6.5h6" stroke="#2d4f9a"/><path d="M2 12.5h9" stroke="#2d4f9a" stroke-width="1.6"/></svg>
<svg class="a" style="left:1323px;top:987px" width="8" height="5" viewBox="0 0 8 5"><path d="M0 0h8L4 4.5z" fill="#1a1a1a"/></svg>
<svg class="a" style="left:1340px;top:981px" width="16" height="16" viewBox="0 0 16 16"><rect x="0.5" y="3.5" width="13" height="11" fill="#f6f8fc" stroke="#a09060"/><rect x="1" y="4" width="12" height="2" fill="#4a8ad0"/><path d="M12 0.5v6M9 3.5h6" stroke="#e0b040" stroke-width="1.6"/><path d="M13.5 8v6.5H6" fill="none" stroke="#f0d890" stroke-width="1"/></svg>
<svg class="a" style="left:1362px;top:987px" width="8" height="5" viewBox="0 0 8 5"><path d="M0 0h8L4 4.5z" fill="#1a1a1a"/></svg>
<svg class="a" style="left:1379px;top:984px" width="11" height="5" viewBox="0 0 11 5"><rect x="0.65" y="0.65" width="8.7" height="2.7" fill="#fff" stroke="#000" stroke-width="1.3"/></svg>
<svg class="a" style="left:1402px;top:984px" width="11" height="11" viewBox="0 0 11 11"><rect x="0.65" y="0.65" width="8.7" height="8.7" fill="none" stroke="#000" stroke-width="1.3"/><path d="M0.5 2.7h9" stroke="#000" stroke-width="1"/></svg>
<div class="a" style="left:293px;top:1019px;width:1113px;height:265px;overflow:hidden">
<div class="a mono" style="left:2px;top:3px;height:15px;line-height:15px;tab-size:8"><span style="color:#2a00ff">10:22:36 **** Incremental Build of configuration Debug for project Test_Base ****</span></div>
<div class="a mono" style="left:2px;top:18px;height:15px;line-height:15px;tab-size:8">make -j4 all</div>
<div class="a mono" style="left:2px;top:33px;height:15px;line-height:15px;tab-size:8">arm-none-eabi-gcc -o &quot;Test_Base.elf&quot; @&quot;objects.list&quot;   -mcpu=cortex-m0plus -T&quot;C:\Users\BRUNO\Documents\[PROGETTI]\STM\03_Workspace\1.14.1\Test_Base\STM32G0B1RETX_FLASH.ld&quot; --specs=nosys.specs</div>
<div class="a mono" style="left:2px;top:48px;height:15px;line-height:15px;tab-size:8">Finished building target: Test_Base.elf</div>
<div class="a mono" style="left:2px;top:78px;height:15px;line-height:15px;tab-size:8">arm-none-eabi-size  Test_Base.elf</div>
<div class="a mono" style="left:2px;top:93px;height:15px;line-height:15px;tab-size:8">arm-none-eabi-objdump -h -S Test_Base.elf  &gt; &quot;Test_Base.list&quot;</div>
<div class="a mono" style="left:2px;top:108px;height:15px;line-height:15px;tab-size:8">   text	   data	    bss	    dec	    hex	filename</div>
<div class="a mono" style="left:2px;top:123px;height:15px;line-height:15px;tab-size:8">  11584	     20	   1716	  13320	   3408	Test_Base.elf</div>
<div class="a mono" style="left:2px;top:138px;height:15px;line-height:15px;tab-size:8">Finished building: default.size.stdout</div>
<div class="a mono" style="left:2px;top:168px;height:15px;line-height:15px;tab-size:8">Finished building: Test_Base.list</div>
<div class="a mono" style="left:2px;top:213px;height:15px;line-height:15px;tab-size:8"><span style="color:#2a00ff">10:22:37 Build Finished. 0 errors, 0 warnings. (took 1s.558ms)</span></div>
</div>
<div class="a ui" style="left:294.00px;top:1000px;height:20px;line-height:20px;transform:scaleX(0.9335);transform-origin:0 0;">CDT Build Console [Test_Base]</div>
<div class="a" style="left:1427px;top:976px;width:1px;height:325px;background:#d5d5d5;"></div>
<div class="a" style="left:1427px;top:976px;width:654px;height:1px;background:#d5d5d5;"></div>
<div class="a" style="left:1427px;top:1300px;width:654px;height:1px;background:#d5d5d5;"></div>
<div class="a" style="left:1428px;top:977px;width:654px;height:1px;background:#e9e9e9;"></div>
<div class="a" style="left:1428px;top:978px;width:654px;height:1px;background:#e9e9e9;"></div>
<div class="a" style="left:1428px;top:979px;width:654px;height:1px;background:#e8e8e8;"></div>
<div class="a" style="left:1428px;top:980px;width:654px;height:1px;background:#e8e8e8;"></div>
<div class="a" style="left:1428px;top:981px;width:654px;height:1px;background:#e8e8e8;"></div>
<div class="a" style="left:1428px;top:982px;width:654px;height:1px;background:#e7e7e7;"></div>
<div class="a" style="left:1428px;top:983px;width:654px;height:1px;background:#e7e7e7;"></div>
<div class="a" style="left:1428px;top:984px;width:654px;height:1px;background:#e7e7e7;"></div>
<div class="a" style="left:1428px;top:985px;width:654px;height:1px;background:#e7e7e7;"></div>
<div class="a" style="left:1428px;top:986px;width:654px;height:1px;background:#e6e6e6;"></div>
<div class="a" style="left:1428px;top:987px;width:654px;height:1px;background:#e6e6e6;"></div>
<div class="a" style="left:1428px;top:988px;width:654px;height:1px;background:#e6e6e6;"></div>
<div class="a" style="left:1428px;top:989px;width:654px;height:1px;background:#e5e5e5;"></div>
<div class="a" style="left:1428px;top:990px;width:654px;height:1px;background:#e5e5e5;"></div>
<div class="a" style="left:1428px;top:991px;width:654px;height:1px;background:#e5e5e5;"></div>
<div class="a" style="left:1428px;top:992px;width:654px;height:1px;background:#e4e4e4;"></div>
<div class="a" style="left:1428px;top:993px;width:654px;height:1px;background:#e4e4e4;"></div>
<div class="a" style="left:1428px;top:994px;width:654px;height:1px;background:#e4e4e4;"></div>
<div class="a" style="left:1428px;top:995px;width:654px;height:1px;background:#e4e4e4;"></div>
<div class="a" style="left:1428px;top:996px;width:654px;height:1px;background:#e3e3e3;"></div>
<div class="a" style="left:1428px;top:997px;width:654px;height:1px;background:#e3e3e3;"></div>
<div class="a" style="left:1428px;top:998px;width:654px;height:1px;background:#e3e3e3;"></div>
<div class="a" style="left:1428px;top:999px;width:654px;height:1px;background:#e2e2e2;"></div>
<div class="a" style="left:1428px;top:1000px;width:654px;height:1px;background:#e2e2e2;"></div>
<div class="a" style="left:1428px;top:977px;width:125px;height:24px;background:#efefef;"></div>
<div class="a" style="left:1553px;top:977px;width:1px;height:24px;background:#d5d5d5;"></div>
<div class="a" style="left:1554px;top:1001px;width:527px;height:1px;background:#d5d5d5;"></div>
<svg class="a" style="left:1434px;top:983px" width="14" height="15" viewBox="0 0 14 15"><path d="M0.5 0.5h8l3 3v11h-11z" fill="#f2f5fc" stroke="#c0a860"/><path d="M0.5 9v5.5h11V9" fill="none" stroke="#989888"/><path d="M8.5 0.5v3h3z" fill="#d4b45c"/><path d="M2 3.5h5M2 5.5h7" stroke="#5a6aa8" stroke-width="0.9"/><ellipse cx="3.3" cy="10.8" rx="1.3" ry="2.3" fill="none" stroke="#14204a" stroke-width="1.2"/><path d="M7.5 8.2v5.2" stroke="#14204a" stroke-width="1.3"/><ellipse cx="11.3" cy="10.8" rx="1.3" ry="2.3" fill="none" stroke="#14204a" stroke-width="1.2"/></svg>
<div class="a ui" style="left:1451.40px;top:980px;height:20px;line-height:20px;transform:scaleX(0.9973);transform-origin:0 0;">Build Analyzer</div>
<svg class="a" style="left:1535px;top:985px" width="10" height="10" viewBox="0 0 10 10"><path d="M0.5 0.5L9.5 9.5M9.5 0.5L0.5 9.5" stroke="#1a1a1a" stroke-width="1.05"/></svg>
<svg class="a" style="left:1557px;top:982px" width="16" height="16" viewBox="0 0 16 16"><rect x="8" y="1" width="4" height="1.5" fill="#b4c0e4"/><rect x="8" y="4" width="4" height="1.6" fill="#7888c8"/><rect x="3.5" y="6.8" width="3" height="1.6" fill="#1a2460"/><rect x="8" y="6.8" width="4" height="1.6" fill="#7888c8"/><rect x="2" y="9.6" width="12" height="1.6" fill="#1a2460"/><rect x="1" y="12.8" width="14" height="1.8" fill="#1a2460"/></svg>
<div class="a ui" style="left:1576.24px;top:980px;height:20px;line-height:20px;transform:scaleX(0.9589);transform-origin:0 0;">Static Stack Analyzer</div>
<svg class="a" style="left:1695px;top:982px" width="16" height="16" viewBox="0 0 16 16"><circle cx="8" cy="8" r="7.3" fill="none" stroke="#6a6a6a" stroke-width="1"/><circle cx="6.2" cy="10.3" r="2.6" fill="none" stroke="#555" stroke-width="1.1"/><circle cx="9.8" cy="6.6" r="1.6" fill="none" stroke="#555" stroke-width="1"/><circle cx="8.2" cy="3.6" r="1.1" fill="none" stroke="#555" stroke-width="0.9"/></svg>
<div class="a ui" style="left:1715.20px;top:980px;height:20px;line-height:20px;transform:scaleX(1.0207);transform-origin:0 0;">Cyclomatic Complexity</div>
<div class="a" style="left:1428px;top:1002px;width:654px;height:298px;background:#efefef;"></div>
<div class="a" style="left:1433px;top:1030px;width:98px;height:19px;background:#fff;"></div>
<div class="a" style="left:1433px;top:1030px;width:97px;height:2px;background:#5a5a5a;border-top-right-radius:2px;"></div>
<div class="a" style="left:1530px;top:1030px;width:1px;height:19px;background:#a8a8a8;"></div>
<div class="a" style="left:1621px;top:1029px;width:1px;height:19px;background:#a8a8a8;"></div>
<div class="a" style="left:1531px;top:1048px;width:550px;height:1px;background:#a8a8a8;"></div>
<div class="a ui" style="left:1436.91px;top:1030px;height:20px;line-height:20px;transform:scaleX(0.9922);transform-origin:0 0;">Memory Regions</div>
<div class="a ui" style="left:1534.59px;top:1030px;height:20px;line-height:20px;transform:scaleX(1.0110);transform-origin:0 0;">Memory Details</div>
<div class="a" style="left:1435px;top:1051px;width:646px;height:242px;background:#fff;"></div>
<div class="a" style="left:1535px;top:1051px;width:1px;height:242px;background:#ededed;"></div>
<div class="a" style="left:1635px;top:1051px;width:1px;height:242px;background:#ededed;"></div>
<div class="a" style="left:1735px;top:1051px;width:1px;height:242px;background:#ededed;"></div>
<div class="a" style="left:1835px;top:1051px;width:1px;height:242px;background:#ededed;"></div>
<div class="a" style="left:1935px;top:1051px;width:1px;height:242px;background:#ededed;"></div>
<div class="a" style="left:2035px;top:1051px;width:1px;height:242px;background:#ededed;"></div>
<div class="a" style="left:1435px;top:1093px;width:646px;height:1px;background:#ededed;"></div>
<div class="a" style="left:1435px;top:1112px;width:646px;height:1px;background:#ededed;"></div>
<div class="a" style="left:1435px;top:1131px;width:646px;height:1px;background:#ededed;"></div>
<div class="a" style="left:1435px;top:1150px;width:646px;height:1px;background:#ededed;"></div>
<div class="a" style="left:1435px;top:1169px;width:646px;height:1px;background:#ededed;"></div>
<div class="a" style="left:1435px;top:1188px;width:646px;height:1px;background:#ededed;"></div>
<div class="a" style="left:1435px;top:1207px;width:646px;height:1px;background:#ededed;"></div>
<div class="a" style="left:1435px;top:1226px;width:646px;height:1px;background:#ededed;"></div>
<div class="a" style="left:1435px;top:1245px;width:646px;height:1px;background:#ededed;"></div>
<div class="a" style="left:1435px;top:1264px;width:646px;height:1px;background:#ededed;"></div>
<div class="a" style="left:1435px;top:1283px;width:646px;height:1px;background:#ededed;"></div>
<div class="a ui" style="left:1440.82px;top:1053px;height:20px;line-height:20px;transform:scaleX(0.9838);transform-origin:0 0;">Region</div>
<div class="a ui" style="left:1540.75px;top:1053px;height:20px;line-height:20px;transform:scaleX(0.9500);transform-origin:0 0;">Start address</div>
<div class="a ui" style="left:1640.75px;top:1053px;height:20px;line-height:20px;transform:scaleX(0.9530);transform-origin:0 0;">End address</div>
<div class="a ui" style="left:1740.80px;top:1053px;height:20px;line-height:20px;transform:scaleX(0.8955);transform-origin:0 0;">Size</div>
<div class="a ui" style="left:1840.68px;top:1053px;height:20px;line-height:20px;transform:scaleX(0.9167);transform-origin:0 0;">Free</div>
<div class="a ui" style="left:1940.64px;top:1053px;height:20px;line-height:20px;transform:scaleX(0.9556);transform-origin:0 0;">Used</div>
<div class="a ui" style="left:2040.53px;top:1053px;height:20px;line-height:20px;transform:scaleX(0.9750);transform-origin:0 0;">Usage (%)</div>
<svg class="a" style="left:0px;top:1304px" width="16" height="15" viewBox="0 0 16 15"><rect width="16" height="15" fill="#48abe2"/><text x="2" y="11.5" textLength="12" lengthAdjust="spacingAndGlyphs" font-family="Liberation Sans" font-weight="bold" font-size="9.5" fill="#f2faff">MX</text></svg>
<div class="a ui" style="left:21.00px;top:1302px;height:20px;line-height:20px;transform:scaleX(0.9037);transform-origin:0 0;">Test_Base/Test_Base.ioc</div>
</body></html>
